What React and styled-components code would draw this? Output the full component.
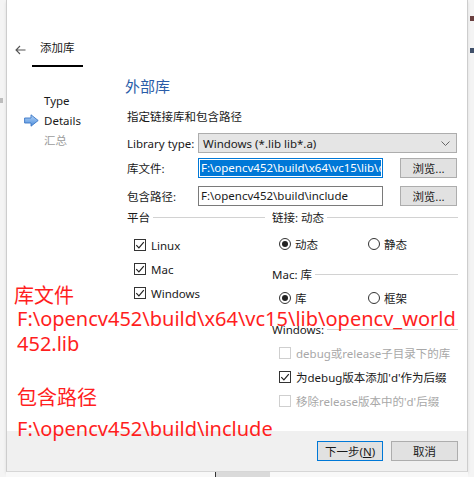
import React from "react";
import styled, { createGlobalStyle } from "styled-components";

const Global = createGlobalStyle`
  html, body { margin: 0; padding: 0; background: #f4f4f4; }
  body {
    font-family: "Noto Sans", "Noto Sans CJK SC", sans-serif;
    font-size: 11.5px;
    color: #1a1a1a;
  }
`;

const Page = styled.div`
  position: relative;
  width: 474px;
  height: 477px;
  overflow: hidden;
  display: flex;
  background: #f4f4f4;
`;

const Gutter = styled.div`
  width: 6px;
  flex: none;
  display: flex;
  flex-direction: column;
  align-items: ${(p) => (p.$right ? "flex-end" : "flex-start")};
`;

const GutterMark = styled.span`
  margin-top: ${(p) => p.$top}px;
  width: ${(p) => p.$w}px;
  height: ${(p) => p.$h}px;
  background: ${(p) => p.$c};
`;

const Window = styled.div`
  width: 462px;
  flex: none;
  display: flex;
  flex-direction: column;
`;

const Dialog = styled.div`
  height: 472px;
  box-sizing: border-box;
  border-left: 1px solid #cdcdcd;
  border-right: 1px solid #cdcdcd;
  border-bottom: 1px solid #d6d6d6;
  background: #fff;
  display: flex;
  flex-direction: column;
  box-shadow: 0 2px 3px rgba(0, 0, 0, 0.1);
`;

const BelowStrip = styled.div`
  flex: 1;
  display: flex;
  padding-left: 209px;
  background: #f8f8f8;
`;

const BelowLine = styled.span`
  width: 1px;
  background: #333;
`;

const BelowBlock = styled.span`
  width: 54px;
  background: #dadada;
`;

const Header = styled.div`
  height: 67px;
  flex: none;
  display: flex;
  align-items: stretch;
  padding-left: 8px;
`;

const BackButton = styled.div`
  width: 12px;
  padding-top: 43px;
  color: #555;
`;

const Tab = styled.div`
  margin-left: 5px;
  padding: 0 8px 9px;
  display: flex;
  align-items: flex-end;
  box-sizing: border-box;
  border-bottom: 2px solid #000;
  font-size: 11.5px;
  line-height: 16px;
  color: #1a1a1a;
`;

const Body = styled.div`
  flex: 1;
  min-height: 0;
  display: grid;
  grid-template-columns: 117px 1fr;
`;

const Nav = styled.nav`
  padding-top: 23px;
  display: flex;
  flex-direction: column;
`;

const NavItem = styled.div`
  height: 20px;
  display: flex;
  align-items: center;
  padding-left: 17px;
  color: ${(p) => (p.$muted ? "#9c9c9c" : "#1a1a1a")};
`;

const NavIcon = styled.span`
  width: 20px;
  flex: none;
  display: flex;
  align-items: center;
`;

const Content = styled.div`
  min-width: 0;
  padding: 8px 9px 0 3px;
  display: flex;
  flex-direction: column;
`;

const Heading = styled.h2`
  margin: 0 0 0 -2px;
  font-weight: 400;
  font-size: 15px;
  line-height: 22px;
  color: #2a5ca8;
`;

const Lead = styled.p`
  margin: 12px 0 0;
  line-height: 16px;
`;

const FieldRow = styled.div`
  margin-top: ${(p) => p.$top}px;
  height: 20px;
  display: grid;
  grid-template-columns: 71px 185px minmax(0, 1fr);
  align-items: center;
`;

const FieldLabel = styled.span`
  white-space: nowrap;
`;

const Combo = styled.div`
  grid-column: 2 / -1;
  margin-right: 1px;
  height: 20px;
  box-sizing: border-box;
  border: 1px solid #adadad;
  background: #e5e5e5;
  display: flex;
  align-items: center;
  justify-content: space-between;
  padding: 0 6px 0 4px;
  white-space: nowrap;
`;

const TextBox = styled.div`
  height: 20px;
  min-width: 0;
  box-sizing: border-box;
  border: 1px solid ${(p) => (p.$focused ? "#0078d7" : "#7a7a7a")};
  background: #fff;
  padding: 0 1px;
  display: flex;
  align-items: center;
  overflow: hidden;
  white-space: nowrap;
`;

const Selection = styled.span`
  flex: 1;
  min-width: 0;
  overflow: hidden;
  text-overflow: clip;
  background: #0078d7;
  color: #fff;
  line-height: 16px;
  padding: 0 1px;
`;

const PlainText = styled.span`
  line-height: 16px;
  padding: 0 1px;
`;

const Button = styled.button`
  height: 20px;
  box-sizing: border-box;
  border: 1px solid ${(p) => (p.$primary ? "#0078d7" : "#adadad")};
  background: #e1e1e1;
  font: inherit;
  color: #1a1a1a;
  padding: 0;
  display: flex;
  align-items: center;
  justify-content: center;
  width: ${(p) => p.$w}px;
  justify-self: start;
  margin-left: ${(p) => p.$offset || 0}px;
`;

const Groups = styled.div`
  margin-top: 3px;
  display: grid;
  grid-template-columns: 138px 186px;
  column-gap: 7px;
  align-items: start;
`;

const Column = styled.div`
  display: flex;
  flex-direction: column;
`;

const GroupHeader = styled.div`
  margin-top: ${(p) => p.$top || 0}px;
  height: 16px;
  display: flex;
  align-items: center;
  gap: 3px;
  white-space: nowrap;
  &::after {
    content: "";
    flex: 1;
    height: 1px;
    background: #d2d2d2;
  }
`;

const Options = styled.div`
  margin-top: ${(p) => p.$top}px;
  padding-left: 7px;
  display: flex;
  flex-direction: column;
`;

const CheckRow = styled.div`
  height: ${(p) => p.$h || 24}px;
  display: flex;
  align-items: center;
  gap: 5px;
  white-space: nowrap;
  color: ${(p) => (p.$disabled ? "#a8a8a8" : "#1a1a1a")};
`;

const Box = styled.span`
  width: 12px;
  height: 12px;
  box-sizing: border-box;
  border: 1px solid ${(p) => (p.$disabled ? "#cfcfcf" : "#333")};
  background: #fff;
  flex: none;
  display: flex;
  align-items: center;
  justify-content: center;
`;

const RadioRow = styled.div`
  height: 24px;
  display: grid;
  grid-template-columns: 89px 1fr;
  align-items: center;
`;

const RadioOption = styled.span`
  display: flex;
  align-items: center;
  gap: 4px;
  white-space: nowrap;
`;

const RadioDot = styled.span`
  width: 12px;
  height: 12px;
  box-sizing: border-box;
  border-radius: 50%;
  border: 1px solid #333;
  flex: none;
  display: flex;
  align-items: center;
  justify-content: center;
  &::after {
    content: "";
    width: 6px;
    height: 6px;
    border-radius: 50%;
    background: ${(p) => (p.$on ? "#222" : "transparent")};
  }
`;

const Footer = styled.div`
  height: 40px;
  flex: none;
  background: #f0f0f0;
  display: flex;
  justify-content: flex-end;
  align-items: flex-start;
  gap: 8px;
  padding: 10px 9px 0 0;
  box-sizing: border-box;
`;

const Underlined = styled.span`
  text-decoration: underline;
`;

const Note = styled.div`
  position: absolute;
  left: ${(p) => p.$x}px;
  top: ${(p) => p.$y}px;
  display: flex;
  flex-direction: column;
  color: #ff1e1e;
  font-family: "Noto Sans", "Noto Sans CJK SC", sans-serif;
  font-size: 20px;
  line-height: 24px;
  white-space: nowrap;
`;

const NoteLine = styled.span`
  margin-top: ${(p) => p.$top || 0}px;
  margin-left: ${(p) => p.$indent || 0}px;
`;

const Check = () => (
  <svg width="10" height="10" viewBox="0 0 10 10">
    <path d="M1.3 5.2 L3.9 7.8 L8.8 2.2" fill="none" stroke="#222" strokeWidth="1.2" />
  </svg>
);

const CheckItem = ({ checked, disabled, h, children }) => (
  <CheckRow $disabled={disabled} $h={h}>
    <Box $disabled={disabled}>{checked && <Check />}</Box>
    {children}
  </CheckRow>
);

const Radio = ({ on, children }) => (
  <RadioOption>
    <RadioDot $on={on} />
    {children}
  </RadioOption>
);

export default function App() {
  return (
    <>
      <Global />
      <Page>
        <Gutter>
          <GutterMark $top={98} $w={3} $h={5} $c="#bdbdbd" />
        </Gutter>
        <Window>
          <Dialog>
            <Header>
              <BackButton>
                <svg width="11" height="10" viewBox="0 0 11 10">
                  <path d="M10.5 5 H1 M5 1 L1 5 L5 9" fill="none" stroke="#555" strokeWidth="1.1" />
                </svg>
              </BackButton>
              <Tab>添加库</Tab>
            </Header>
            <Body>
              <Nav>
                <NavItem>
                  <NavIcon />
                  Type
                </NavItem>
                <NavItem>
                  <NavIcon>
                    <svg width="15" height="13" viewBox="0 0 15 13">
                      <defs>
                        <linearGradient id="navArrow" x1="0" y1="0" x2="0" y2="1">
                          <stop offset="0" stopColor="#b5d5f8" />
                          <stop offset="1" stopColor="#4d8ddb" />
                        </linearGradient>
                      </defs>
                      <path
                        d="M0.6 4 H7 V0.8 L14.2 6.5 L7 12.2 V9 H0.6 Z"
                        fill="url(#navArrow)"
                        stroke="#3b77c6"
                        strokeWidth="0.9"
                        strokeLinejoin="round"
                      />
                    </svg>
                  </NavIcon>
                  Details
                </NavItem>
                <NavItem $muted>
                  <NavIcon />
                  汇总
                </NavItem>
              </Nav>
              <Content>
                <Heading>外部库</Heading>
                <Lead>指定链接库和包含路径</Lead>
                <FieldRow $top={8}>
                  <FieldLabel>Library type:</FieldLabel>
                  <Combo>
                    <span>Windows (*.lib lib*.a)</span>
                    <svg width="9" height="5" viewBox="0 0 9 5">
                      <path d="M0.5 0.5 L4.5 4.5 L8.5 0.5" fill="none" stroke="#666" strokeWidth="1" />
                    </svg>
                  </Combo>
                </FieldRow>
                <FieldRow $top={5}>
                  <FieldLabel>库文件:</FieldLabel>
                  <TextBox $focused>
                    <Selection>F:\opencv452\build\x64\vc15\lib\opencv_world452.lib</Selection>
                  </TextBox>
                  <Button $w={57} $offset={17}>浏览...</Button>
                </FieldRow>
                <FieldRow $top={8}>
                  <FieldLabel>包含路径:</FieldLabel>
                  <TextBox>
                    <PlainText>F:\opencv452\build\include</PlainText>
                  </TextBox>
                  <Button $w={57} $offset={17}>浏览...</Button>
                </FieldRow>
                <Groups>
                  <Column>
                    <GroupHeader>平台</GroupHeader>
                    <Options $top={8}>
                      <CheckItem checked>Linux</CheckItem>
                      <CheckItem checked>Mac</CheckItem>
                      <CheckItem checked>Windows</CheckItem>
                    </Options>
                  </Column>
                  <Column>
                    <GroupHeader>链接: 动态</GroupHeader>
                    <Options $top={7}>
                      <RadioRow>
                        <Radio on>动态</Radio>
                        <Radio>静态</Radio>
                      </RadioRow>
                    </Options>
                    <GroupHeader $top={10}>Mac: 库</GroupHeader>
                    <Options $top={4}>
                      <RadioRow>
                        <Radio on>库</Radio>
                        <Radio>框架</Radio>
                      </RadioRow>
                    </Options>
                    <GroupHeader $top={11}>Windows:</GroupHeader>
                    <Options $top={4}>
                      <CheckItem disabled>debug或release子目录下的库</CheckItem>
                      <CheckItem checked>为debug版本添加'd'作为后缀</CheckItem>
                      <CheckItem disabled h={23}>移除release版本中的'd'后缀</CheckItem>
                    </Options>
                  </Column>
                </Groups>
              </Content>
            </Body>
            <Footer>
              <Button $primary $w={66}>
                下一步(<Underlined>N</Underlined>)
              </Button>
              <Button $w={67}>取消</Button>
            </Footer>
          </Dialog>
          <BelowStrip>
            <BelowLine />
            <BelowBlock />
          </BelowStrip>
        </Window>
        <Gutter $right>
          <GutterMark $top={16} $w={4} $h={5} $c="#6a4040" />
          <GutterMark $top={27} $w={4} $h={5} $c="#40506a" />
        </Gutter>
        <Note $x={14} $y={284}>
          <NoteLine>库文件</NoteLine>
          <NoteLine $indent={3} $top={-1}>F:\opencv452\build\x64\vc15\lib\opencv_world</NoteLine>
          <NoteLine $indent={3} $top={1}>452.lib</NoteLine>
        </Note>
        <Note $x={17} $y={386}>
          <NoteLine>包含路径</NoteLine>
          <NoteLine $top={7}>F:\opencv452\build\include</NoteLine>
        </Note>
      </Page>
    </>
  );
}
